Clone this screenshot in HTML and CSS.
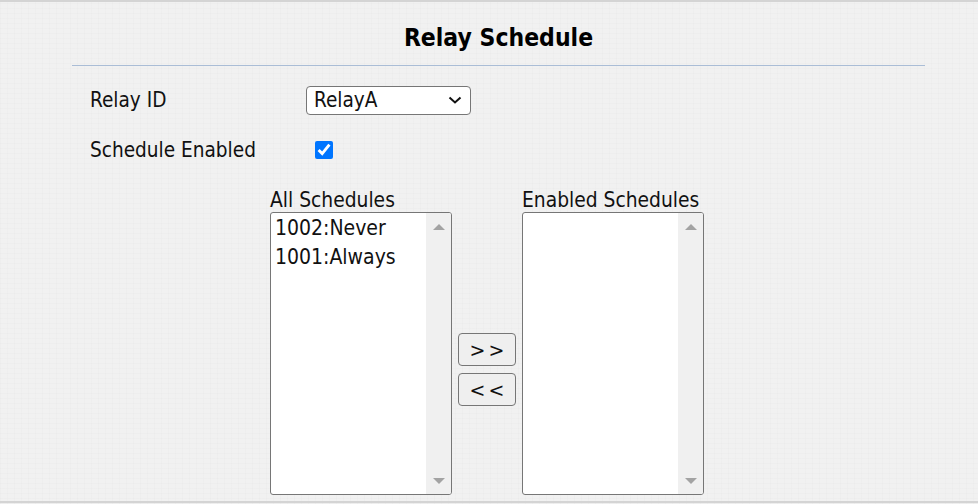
FILE: index.html
```html
<!DOCTYPE html>
<html lang="en">
<head>
    <meta charset="UTF-8">
    <meta name="viewport" content="width=device-width, initial-scale=1.0">
    <title>Relay Schedule</title>
    <link rel="stylesheet" href="styles.css">
</head>
<body>
    <div class="page">
        <h2 class="title">Relay Schedule</h2>
        <div class="panel">
            <div class="row">
                <label class="label">Relay ID</label>
                <div class="select">
                    <span>RelayA</span>
                    <svg class="chevron" width="14" height="8" viewBox="0 0 14 8">
                        <path d="M1.5 1.5 L7 6.5 L12.5 1.5" fill="none" stroke="#111" stroke-width="2"/>
                    </svg>
                </div>
            </div>
            <div class="row">
                <label class="label">Schedule Enabled</label>
                <input type="checkbox" class="check" checked>
            </div>

            <!-- schedule pickers -->
            <div class="picker">
                <div class="list-title">All Schedules</div>
                <div></div>
                <div class="list-title">Enabled Schedules</div>

                <div class="listbox">
                    <ul class="items">
                        <li>1002:Never</li>
                        <li>1001:Always</li>
                    </ul>
                    <div class="scrollbar">
                        <span class="arrow up"></span>
                        <span class="arrow down"></span>
                    </div>
                </div>
                <div class="moves">
                    <button class="move">&gt;&gt;</button>
                    <button class="move">&lt;&lt;</button>
                </div>
                <div class="listbox">
                    <ul class="items"></ul>
                    <div class="scrollbar">
                        <span class="arrow up"></span>
                        <span class="arrow down"></span>
                    </div>
                </div>
            </div>
        </div>
    </div>
</body>
</html>
```

FILE: styles.css
```css
html, body {
    margin: 0;
    height: 100%;
}
body {
    background-color: #f1f1f1;
    background-image:
        repeating-linear-gradient(0deg, rgba(0, 0, 0, 0.012) 0 1px, transparent 1px 5px),
        repeating-linear-gradient(90deg, rgba(0, 0, 0, 0.012) 0 1px, transparent 1px 7px);
    font-family: "DejaVu Sans Condensed", "DejaVu Sans", sans-serif;
    color: #111;
    overflow: hidden;
}
.page {
    border-top: 2px solid #d4d4d4;
    border-bottom: 2px solid #d4d4d4;
    height: 503px;
    box-sizing: border-box;
    padding: 0 53px 0 72px;
}
.title {
    margin: 0;
    height: 64px;
    box-sizing: border-box;
    padding-top: 22px;
    text-align: center;
    font-size: 24.5px;
    font-weight: bold;
    line-height: 28px;
    color: #000;
    border-bottom: 1px solid #aabdd6;
}
.panel {
    padding: 19px 0 0 18px;
}
.row {
    display: flex;
    align-items: center;
    height: 30px;
    margin-bottom: 20px;
}
.label {
    width: 216px;
    font-size: 20.6px;
}
.select {
    width: 165px;
    height: 29px;
    box-sizing: border-box;
    border: 1px solid #767676;
    border-radius: 4px;
    background: #fff;
    display: flex;
    align-items: center;
    justify-content: space-between;
    padding: 0 8px 0 7px;
    font-size: 20.6px;
}
.check {
    width: 18px;
    height: 18px;
    margin: 0 0 0 9px;
    accent-color: #0075ff;
}
.picker {
    display: grid;
    grid-template-columns: 182px 58px 182px;
    column-gap: 6px;
    margin-left: 180px;
    margin-top: 24px;
}
.list-title {
    font-size: 20.8px;
    line-height: 23px;
}
.listbox {
    height: 283px;
    box-sizing: border-box;
    border: 1px solid #767676;
    border-radius: 3px;
    background: #fff;
    display: flex;
    overflow: hidden;
}
.items {
    list-style: none;
    margin: 0;
    padding: 1px 0 0 4px;
    flex: 1;
    font-size: 21px;
    line-height: 29px;
}
.scrollbar {
    width: 25px;
    background: #f0f0f0;
    display: flex;
    flex-direction: column;
    justify-content: space-between;
    align-items: center;
    padding: 11px 0 10px;
}
.arrow {
    width: 0;
    height: 0;
    border-left: 6px solid transparent;
    border-right: 6px solid transparent;
}
.arrow.up {
    border-bottom: 6px solid #a3a3a3;
}
.arrow.down {
    border-top: 6px solid #a3a3a3;
}
.moves {
    display: flex;
    flex-direction: column;
    gap: 7px;
    padding-top: 121px;
}
.move {
    height: 33px;
    border: 1px solid #767676;
    border-radius: 4px;
    background: #efefef;
    font-family: "DejaVu Sans", sans-serif;
    font-size: 19px;
    letter-spacing: 3px;
    padding: 0 0 0 3px;
    color: #111;
}
```
